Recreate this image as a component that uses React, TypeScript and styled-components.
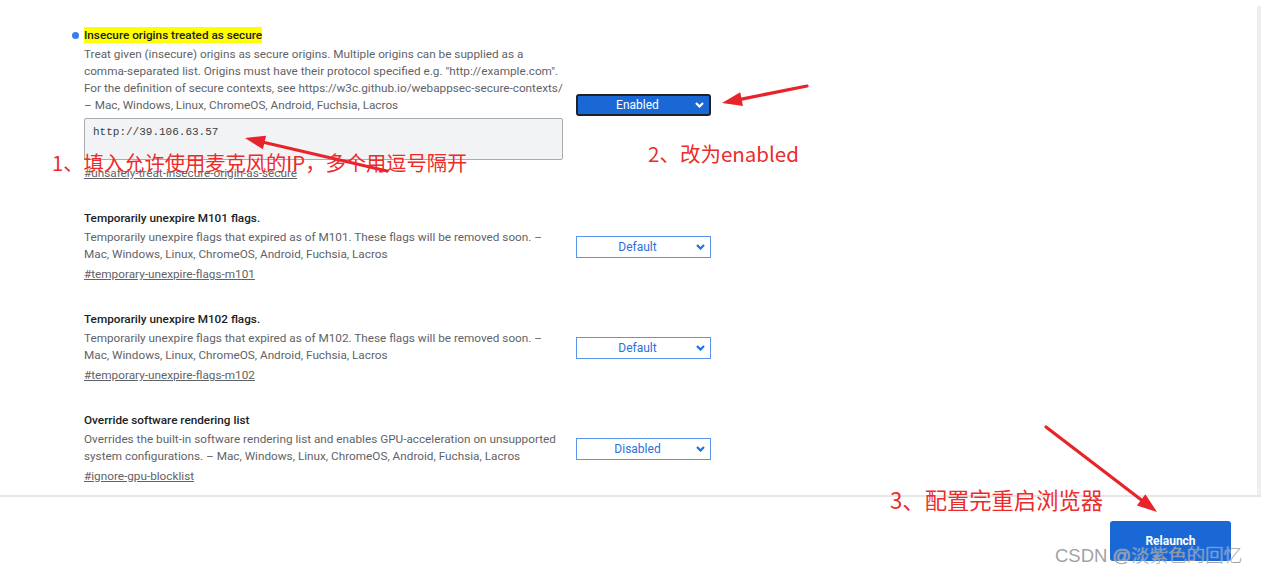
import React from 'react'
import styled, { createGlobalStyle } from 'styled-components'

const GlobalStyle = createGlobalStyle`
  html, body {
    margin: 0;
    padding: 0;
    background: #ffffff;
    font-family: Roboto, 'Noto Sans', 'Liberation Sans', sans-serif;
  }
`

type Experiment = {
  title: string
  highlight?: boolean
  lines: string[]
  input?: string
  link: string
  value: string
  active?: boolean
}

const experiments: Experiment[] = [
  {
    title: 'Insecure origins treated as secure',
    highlight: true,
    lines: [
      'Treat given (insecure) origins as secure origins. Multiple origins can be supplied as a',
      'comma-separated list. Origins must have their protocol specified e.g. "http://example.com".',
      'For the definition of secure contexts, see https://w3c.github.io/webappsec-secure-contexts/',
      '– Mac, Windows, Linux, ChromeOS, Android, Fuchsia, Lacros',
    ],
    input: 'http://39.106.63.57',
    link: '#unsafely-treat-insecure-origin-as-secure',
    value: 'Enabled',
    active: true,
  },
  {
    title: 'Temporarily unexpire M101 flags.',
    lines: [
      'Temporarily unexpire flags that expired as of M101. These flags will be removed soon. –',
      'Mac, Windows, Linux, ChromeOS, Android, Fuchsia, Lacros',
    ],
    link: '#temporary-unexpire-flags-m101',
    value: 'Default',
  },
  {
    title: 'Temporarily unexpire M102 flags.',
    lines: [
      'Temporarily unexpire flags that expired as of M102. These flags will be removed soon. –',
      'Mac, Windows, Linux, ChromeOS, Android, Fuchsia, Lacros',
    ],
    link: '#temporary-unexpire-flags-m102',
    value: 'Default',
  },
  {
    title: 'Override software rendering list',
    lines: [
      'Overrides the built-in software rendering list and enables GPU-acceleration on unsupported',
      'system configurations. – Mac, Windows, Linux, ChromeOS, Android, Fuchsia, Lacros',
    ],
    link: '#ignore-gpu-blocklist',
    value: 'Disabled',
  },
]

const Chevron = ({ color }: { color: string }) => (
  <svg width="9" height="6" viewBox="0 0 9 6">
    <path d="M1 1l3.5 3.5L8 1" fill="none" stroke={color} strokeWidth="2.2" />
  </svg>
)

const Arrow = ({ x1, y1, x2, y2 }: { x1: number; y1: number; x2: number; y2: number }) => {
  const a = Math.atan2(y2 - y1, x2 - x1)
  const len = 20
  const w = 7
  const bx = x2 - Math.cos(a) * len
  const by = y2 - Math.sin(a) * len
  const px = -Math.sin(a) * w
  const py = Math.cos(a) * w
  return (
    <g>
      <line x1={x1} y1={y1} x2={bx} y2={by} stroke="#e8232a" strokeWidth="3.2" strokeLinecap="round" />
      <polygon points={`${x2},${y2} ${bx + px},${by + py} ${bx - px},${by - py}`} fill="#e8232a" />
    </g>
  )
}

export default function App() {
  return (
    <Page>
      <GlobalStyle />
      <Main>
        <Content>
          {experiments.map((exp) => (
            <Item key={exp.link}>
              <TextCol>
                <Title $dot={exp.highlight}>
                  <TitleText $highlight={exp.highlight}>{exp.title}</TitleText>
                </Title>
                <Desc>
                  {exp.lines.map((l) => (
                    <div key={l}>{l}</div>
                  ))}
                </Desc>
                {exp.input && <OriginBox>{exp.input}</OriginBox>}
                <Permalink $gap={exp.input ? 5 : 3}>{exp.link}</Permalink>
              </TextCol>
              <Select $active={exp.active}>
                <span>{exp.value}</span>
                <ChevronSlot>
                  <Chevron color={exp.active ? '#ffffff' : '#1a73e8'} />
                </ChevronSlot>
              </Select>
            </Item>
          ))}
        </Content>
        <ScrollTrack />
      </Main>
      <Footer>
        <RelaunchButton>Relaunch</RelaunchButton>
      </Footer>

      <Overlay width="1261" height="576" viewBox="0 0 1261 576">
        <Arrow x1={387} y1={171} x2={245} y2={138} />
        <Arrow x1={807} y1={86} x2={722} y2={103} />
        <Arrow x1={1046} y1={427} x2={1157} y2={512} />
      </Overlay>
      <Note $size={20.3} style={{ left: 52, top: 148 }}>1、填入允许使用麦克风的IP，多个用逗号隔开</Note>
      <Note $size={20.5} style={{ left: 648, top: 139 }}>2、改为enabled</Note>
      <Note $size={22.3} style={{ left: 890, top: 485 }}>3、配置完重启浏览器</Note>
      <Watermark>CSDN @淡紫色的回忆</Watermark>
    </Page>
  )
}

const Page = styled.div`
  position: relative;
  width: 1261px;
  height: 576px;
  overflow: hidden;
  display: flex;
  flex-direction: column;
  background: #ffffff;
`

const Main = styled.div`
  display: flex;
  height: 497px;
  flex-shrink: 0;
  border-bottom: 2px solid #e6e6e6;
  box-sizing: border-box;
`

const Content = styled.div`
  flex: 1;
  padding: 27px 0 0 84px;
  display: flex;
  flex-direction: column;
  gap: 28px;
`

const ScrollTrack = styled.div`
  width: 4px;
  margin-top: 6px;
  background: #efefef;
`

const Item = styled.div`
  display: grid;
  grid-template-columns: 479px 135px;
  column-gap: 13px;
  align-items: center;
`

const TextCol = styled.div`
  display: flex;
  flex-direction: column;
`

const Title = styled.div<{ $dot?: boolean }>`
  position: relative;
  height: 17px;
  line-height: 17px;
  font-size: 11.75px;
  font-weight: 500;
  color: #202124;
  &::before {
    content: '';
    display: ${(p) => (p.$dot ? 'block' : 'none')};
    position: absolute;
    left: -12px;
    top: 5px;
    width: 7px;
    height: 7px;
    border-radius: 50%;
    background: #3b7bea;
  }
`

const TitleText = styled.span<{ $highlight?: boolean }>`
  background: ${(p) => (p.$highlight ? '#ffff00' : 'transparent')};
  padding: 1px 0;
`

const Desc = styled.div`
  margin-top: 2px;
  font-size: 11.75px;
  line-height: 17px;
  color: #5f6368;
  white-space: nowrap;
`

const OriginBox = styled.div`
  margin-top: 4px;
  height: 42px;
  box-sizing: border-box;
  padding: 6px 8px;
  background: #f1f3f4;
  border: 1px solid #a8abaf;
  border-radius: 2px;
  font-family: 'Liberation Mono', 'DejaVu Sans Mono', monospace;
  font-size: 11px;
  line-height: 14px;
  color: #3c4043;
`

const Permalink = styled.div<{ $gap: number }>`
  margin-top: ${(p) => p.$gap}px;
  font-size: 11.75px;
  line-height: 17px;
  color: #5f6368;
  text-decoration: underline;
  white-space: nowrap;
`

const Select = styled.div<{ $active?: boolean }>`
  position: relative;
  height: 22px;
  box-sizing: border-box;
  display: flex;
  align-items: center;
  justify-content: center;
  padding-right: 12px;
  font-size: 12px;
  border-radius: ${(p) => (p.$active ? '3px' : '0')};
  border: ${(p) => (p.$active ? '2px solid #1f2227' : '1px solid #5b94ec')};
  background: ${(p) => (p.$active ? '#1a68d6' : '#ffffff')};
  color: ${(p) => (p.$active ? '#ffffff' : '#2b6fd8')};
`

const ChevronSlot = styled.span`
  position: absolute;
  right: 5px;
  top: 50%;
  transform: translateY(-50%);
  display: flex;
`

const Footer = styled.div`
  flex: 1;
  display: flex;
  justify-content: flex-end;
  align-items: flex-start;
  padding: 24px 30px 0 0;
`

const RelaunchButton = styled.button`
  width: 121px;
  height: 40px;
  border: none;
  border-radius: 3px;
  background: #1a68d6;
  color: #ffffff;
  font-family: Roboto, 'Liberation Sans', sans-serif;
  font-size: 12px;
  font-weight: 700;
  padding: 0;
`

const Overlay = styled.svg`
  position: absolute;
  left: 0;
  top: 0;
  pointer-events: none;
`

const Note = styled.div<{ $size: number }>`
  position: absolute;
  font-family: 'Noto Sans CJK SC', 'Noto Sans', sans-serif;
  font-size: ${(p) => p.$size}px;
  line-height: 28px;
  color: #ec2b2b;
  white-space: nowrap;
`

const Watermark = styled.div`
  position: absolute;
  left: 1055px;
  top: 543px;
  font-family: 'Liberation Sans', 'Noto Sans CJK SC', sans-serif;
  font-size: 18.5px;
  font-weight: 300;
  line-height: 26px;
  color: rgba(130, 130, 130, 0.75);
  text-shadow: 0 0 1px rgba(255, 255, 255, 0.9);
  white-space: nowrap;
`
